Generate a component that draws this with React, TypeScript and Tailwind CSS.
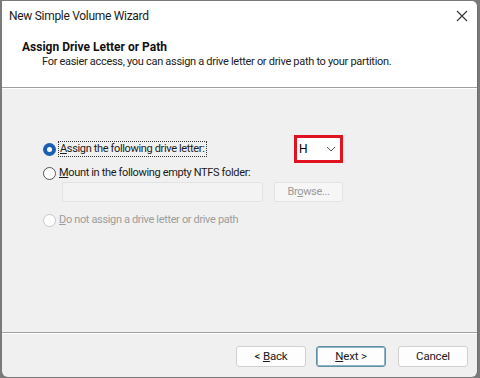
import React from "react";

const Radio = ({ checked, disabled }: { checked?: boolean; disabled?: boolean }) => {
  if (checked) {
    return (
      <span className="flex size-[13px] shrink-0 items-center justify-center rounded-full bg-[#1a5fb4]">
        <span className="size-[5px] rounded-full bg-white" />
      </span>
    );
  }
  return (
    <span
      className={`size-[13px] shrink-0 rounded-full border bg-white ${
        disabled ? "border-[#c8c8c8]" : "border-[#555]"
      }`}
    />
  );
};

const Button = ({ children, primary }: { children: React.ReactNode; primary?: boolean }) => (
  <button
    className={`flex h-[21px] w-[70px] items-center justify-center rounded-[3px] border bg-[#fdfdfd] text-[11.5px] tracking-[-0.2px] text-[#1b1b1b] ${
      primary ? "border-[#5f8fa3] ring-1 ring-inset ring-[#8fb4c4]" : "border-[#d0d0d0]"
    }`}
  >
    <span>{children}</span>
  </button>
);

export default function App() {
  return (
    <div
      className="h-[378px] w-[480px] overflow-hidden bg-[#7a7a7a] pt-px"
      style={{ fontFamily: 'Roboto, "Liberation Sans", sans-serif' }}
    >
      <div className="ml-[2px] flex h-[376px] w-[476px] flex-col overflow-hidden rounded-b-[6px] rounded-tr-[6px] border-r border-[#6d6d6d] bg-[#f0f0f0]">
        <div className="bg-white">
          <div className="flex h-[30px] items-center justify-between pl-[7px] pr-[8px]">
            <span className="text-[12px] tracking-[-0.3px] text-[#1b1b1b]">New Simple Volume Wizard</span>
            <svg width="12" height="12" viewBox="0 0 12 12" className="mr-[1px]">
              <path d="M1 1L11 11M11 1L1 11" stroke="#333" strokeWidth="1.1" />
            </svg>
          </div>
          <div className="h-[56px] pl-[20px] pt-[8px]">
            <div className="text-[12px] font-bold leading-[16px] text-[#111]">Assign Drive Letter or Path</div>
            <div className="pl-[20px] text-[11px] leading-[14px] tracking-[-0.3px] text-[#222]">
              For easier access, you can assign a drive letter or drive path to your partition.
            </div>
          </div>
        </div>
        <div className="h-[2px] border-t border-[#a0a0a0] bg-white" />
        <div className="flex flex-1 flex-col pl-[41px] pt-[48px] text-[11px] tracking-[-0.35px] text-[#1b1b1b]">
          <div className="flex h-[24px] w-[300px] items-center justify-between">
            <div className="flex items-center">
              <Radio checked />
              <span className="ml-[2px] border border-dotted border-[#333] px-[1px] leading-[14px]">
                <u>A</u>ssign the following drive letter:
              </span>
            </div>
            <div className="flex h-[28px] w-[49px] items-center justify-between border-[3px] border-[#e0121f] bg-white pl-[2px] pr-[4px]">
              <span className="text-[12px] text-black">H</span>
              <svg width="10" height="6" viewBox="0 0 10 6">
                <path d="M1 1L5 5L9 1" fill="none" stroke="#555" strokeWidth="1" />
              </svg>
            </div>
          </div>
          <div className="mt-[4px] flex h-[16px] items-center">
            <Radio />
            <span className="ml-[3px] leading-[14px]">
              <u>M</u>ount in the following empty NTFS folder:
            </span>
          </div>
          <div className="mt-[1px] flex items-center pl-[19px]">
            <div className="h-[20px] w-[201px] rounded-[2px] border border-[#e3e3e3] bg-[#f3f3f3]" />
            <div className="ml-[11px] flex h-[20px] w-[69px] items-center justify-center rounded-[2px] border border-[#e3e3e3] bg-[#f6f6f6] text-[#9a9a9a]">
              <span>
                Br<u>o</u>wse...
              </span>
            </div>
          </div>
          <div className="mt-[10px] flex h-[16px] items-center text-[#9d9d9d]">
            <Radio disabled />
            <span className="ml-[3px] leading-[14px]">
              <u>D</u>o not assign a drive letter or drive path
            </span>
          </div>
          <div className="flex-1" />
        </div>
        <div className="h-[2px] border-t border-[#a0a0a0] bg-white" />
        <div className="flex h-[43px] items-start justify-end pr-[9px] pt-[12px]">
          <div className="flex gap-[10px]">
            <Button>
              &lt; <u>B</u>ack
            </Button>
            <Button primary>
              <u>N</u>ext &gt;
            </Button>
          </div>
          <div className="ml-[12px]">
            <Button>Cancel</Button>
          </div>
        </div>
      </div>
    </div>
  );
}
